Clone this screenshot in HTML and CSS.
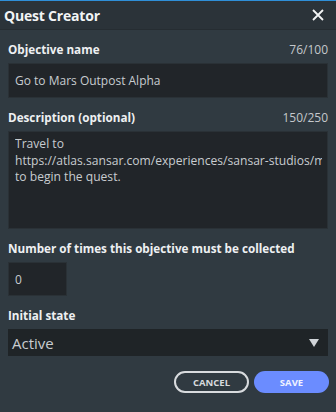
FILE: index.html
```html
<!DOCTYPE html>
<html>
<head>
<meta charset="utf-8">
<link rel="stylesheet" href="styles.css">
</head>
<body>
<div class="dialog">
  <div class="header">
    <div class="title">Quest Creator</div>
    <svg class="close" width="12" height="12" viewBox="0 0 12 12"><path d="M1 1L11 11M11 1L1 11" stroke="#f2f4f5" stroke-width="1.8"/></svg>
  </div>
  <div class="body">
    <div class="labelrow"><span class="label">Objective name</span><span class="count">76/100</span></div>
    <div class="input">Go to Mars Outpost Alpha</div>
    <div class="labelrow"><span class="label">Description (optional)</span><span class="count">150/250</span></div>
    <div class="textarea"><div class="clip">Travel to<br>https://atlas.sansar.com/experiences/sansar-studios/mars-outpost-alpha<br>to begin the quest.</div></div>
    <div class="labelrow"><span class="label">Number of times this objective must be collected</span></div>
    <div class="input small">0</div>
    <div class="labelrow"><span class="label">Initial state</span></div>
    <div class="select"><span>Active</span><svg width="10" height="8" viewBox="0 0 10 8"><path d="M0 0H10L5 8Z" fill="#d0d4d8"/></svg></div>
    <div class="buttons">
      <button class="btn cancel">CANCEL</button>
      <button class="btn save">SAVE</button>
    </div>
  </div>
</div>
</body>
</html>
```
FILE: styles.css
```css
html, body { margin: 0; padding: 0; }
body { width: 336px; height: 412px; background: #303a41; font-family: "Open Sans", sans-serif; overflow: hidden; }
.dialog { width: 336px; height: 412px; border-top: 1px solid #2f8fd8; box-sizing: border-box; background: #303a41; }
.header { height: 28px; background: #2b3339; border-bottom: 1px solid #262d32; display: flex; align-items: center; justify-content: space-between; padding: 0 12px 0 4px; }
.title { color: #f2f4f5; font-weight: 700; font-size: 14px; letter-spacing: -0.2px; }
.body { padding: 0 8px 0 8px; }
.labelrow { display: flex; justify-content: space-between; align-items: center; height: 28px; margin-top: 5px; }
.label { color: #eef0f2; font-weight: 700; font-size: 11.7px; }
.count { color: #c4c8cc; font-size: 12px; }
.input { height: 35px; box-sizing: border-box; background: #212529; border: 1px solid #2a3136; color: #c8ccd0; font-size: 12px; padding: 0 6px; display: flex; align-items: center; }
.input.small { width: 59px; height: 34px; }
.textarea { height: 98px; box-sizing: border-box; background: #212529; border: 1px solid #2a3136; color: #c8ccd0; font-size: 12.1px; line-height: 16.5px; padding: 4px 5px 4px 6px; }
.clip { white-space: nowrap; overflow: hidden; }
.select { height: 27px; background: #1f2427; display: flex; justify-content: space-between; align-items: center; padding: 0 9px 0 4px; color: #c8ccd0; font-size: 15px; }
.buttons { display: flex; justify-content: flex-end; gap: 5px; margin-top: 15px; margin-right: -1px; }
.btn { width: 75px; height: 22px; border-radius: 11px; font-family: "Open Sans", sans-serif; font-weight: 700; font-size: 9.5px; padding: 0; }
.cancel { background: transparent; border: 2px solid #d8dbde; color: #d8dbde; }
.save { background: #6b8cff; border: none; color: #f0f3ff; }
```
